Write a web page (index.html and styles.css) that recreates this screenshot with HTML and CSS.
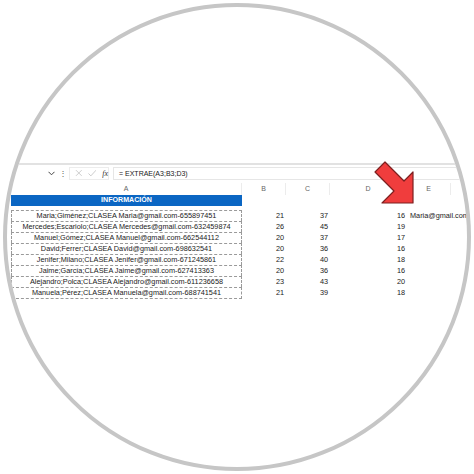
FILE: index.html
```html
<html>
<head>
    <link rel="stylesheet" href="styles.css">
</head>
<body>
    <div class="lens">
        <div class="sheet">
            <div class="formula-bar">
                <div class="name-box">
                    <svg width="7" height="5" viewBox="0 0 7 5"><path d="M0.5 0.8 L3.5 3.8 L6.5 0.8" fill="none" stroke="#444" stroke-width="1"/></svg>
                </div>
                <div class="bar-dots">&#8942;</div>
                <div class="fn-buttons">
                    <svg width="8" height="8" viewBox="0 0 8 8"><path d="M1 1 L7 7 M7 1 L1 7" stroke="#c4c4c4" stroke-width="0.9"/></svg>
                    <svg width="9" height="8" viewBox="0 0 9 8"><path d="M0.5 4.5 L3 7 L8.5 1" fill="none" stroke="#c4c4c4" stroke-width="0.9"/></svg>
                    <span class="fx">fx</span>
                </div>
                <div class="formula-input">= EXTRAE(A3;B3;D3)</div>
            </div>

            <div class="grid col-heads">
                <div class="col-head"></div>
                <div class="col-head">A</div>
                <div class="col-head">B</div>
                <div class="col-head">C</div>
                <div class="col-head">D</div>
                <div class="col-head">E</div>
                <div class="col-head"></div>
            </div>

            <div class="grid title-row">
                <div></div>
                <div class="title-cell">INFORMACIÓN</div>
            </div>

            <div id="rows"></div>
        </div>

        <svg class="arrow" width="50" height="50" viewBox="0 0 50 50">
            <polygon points="5,15 15,5 34,24 43,15 43,46 12,46 24,34" fill="#f03d3d" stroke="#7c1f1f" stroke-width="1.2" stroke-linejoin="round"/>
        </svg>
    </div>

    <script src="sheet.js"></script>
</body>
</html>
```

FILE: sheet.js
```js
var data = [
    ["Maria;Giménez;CLASEA Maria@gmail.com-655897451", 21, 37, 16, "Maria@gmail.com"],
    ["Mercedes;Escariolo;CLASEA Mercedes@gmail.com-632459874", 26, 45, 19, ""],
    ["Manuel;Gómez;CLASEA Manuel@gmail.com-662544112", 20, 37, 17, ""],
    ["David;Ferrer;CLASEA David@gmail.com-698632541", 20, 36, 16, ""],
    ["Jenifer;Milano;CLASEA Jenifer@gmail.com-671245861", 22, 40, 18, ""],
    ["Jaime;García;CLASEA Jaime@gmail.com-627413363", 20, 36, 16, ""],
    ["Alejandro;Polca;CLASEA Alejandro@gmail.com-611236658", 23, 43, 20, ""],
    ["Manuela;Pérez;CLASEA Manuela@gmail.com-688741541", 21, 39, 18, ""]
];

var outlet = document.getElementById("rows");

data.forEach(function (row, i) {
    var line = document.createElement("div");
    line.className = "grid data-row" + (i === data.length - 1 ? " last" : "");

    var html = '<div></div>';
    html += '<div class="info-cell">' + row[0] + '</div>';
    html += '<div class="num">' + row[1] + '</div>';
    html += '<div class="num">' + row[2] + '</div>';
    html += '<div class="num">' + row[3] + '</div>';
    html += '<div class="text-cell">' + row[4] + '</div>';

    line.innerHTML = html;
    outlet.appendChild(line);
});
```

FILE: styles.css
```css
body {
    margin: 0;
    background: #fff;
    font-family: "Liberation Sans", Arial, sans-serif;
    color: #222;
}

/* round "magnifier" crop around the spreadsheet */
.lens {
    position: relative;
    width: 460px;
    height: 460px;
    margin: 3px;
    border: 4px solid #c6c6c6;
    border-radius: 50%;
    overflow: hidden;
    background: #fff;
}

.sheet {
    padding-top: 156px;
}

.formula-bar {
    display: flex;
    align-items: center;
    height: 17px;
    border-top: 2px solid #e2e2e2;
    box-sizing: border-box;
    padding-top: 1px;
}

.name-box {
    width: 50px;
    display: flex;
    justify-content: flex-end;
    padding-right: 2px;
    box-sizing: border-box;
}

.bar-dots {
    width: 10px;
    text-align: center;
    font-size: 8px;
    color: #555;
    margin-left: 1px;
}

.fn-buttons {
    display: flex;
    align-items: center;
    gap: 5px;
    width: 40px;
    height: 13px;
    box-sizing: border-box;
    padding-left: 5px;
    border: 1px solid #ececec;
    margin-left: 1px;
}

.fx {
    font-family: "Liberation Serif", serif;
    font-style: italic;
    font-size: 8px;
    color: #333;
    margin-left: 1px;
}

.formula-input {
    flex: 1;
    height: 13px;
    line-height: 12px;
    box-sizing: border-box;
    margin-left: 4px;
    padding-left: 5px;
    border: 1px solid #e6e6e6;
    font-size: 7px;
    color: #222;
}

.grid {
    display: grid;
    grid-template-columns: 4px 231px 44px 44px 77px 44px 1fr;
}

.col-heads {
    margin-top: 3px;
    height: 12px;
    line-height: 12px;
}

.col-head {
    text-align: center;
    font-size: 7px;
    color: #666;
    border-right: 1px solid #ececec;
}

.title-row {
    height: 15px;
}

.title-cell {
    height: 11px;
    line-height: 11px;
    background: #0b66c3;
    color: #fff;
    font-weight: bold;
    font-size: 7.1px;
    text-align: center;
}

.data-row {
    height: 11px;
    line-height: 10px;
    font-size: 7.3px;
}

.info-cell {
    text-align: center;
    border: 1px dashed #9a9a9a;
    border-bottom: none;
    white-space: nowrap;
}

.data-row.last .info-cell {
    border-bottom: 1px dashed #9a9a9a;
}

.num {
    text-align: right;
    padding-right: 2px;
    line-height: 11px;
}

.text-cell {
    padding-left: 3px;
    line-height: 11px;
    white-space: nowrap;
}

.arrow {
    position: absolute;
    left: 363px;
    top: 150px;
}
```
